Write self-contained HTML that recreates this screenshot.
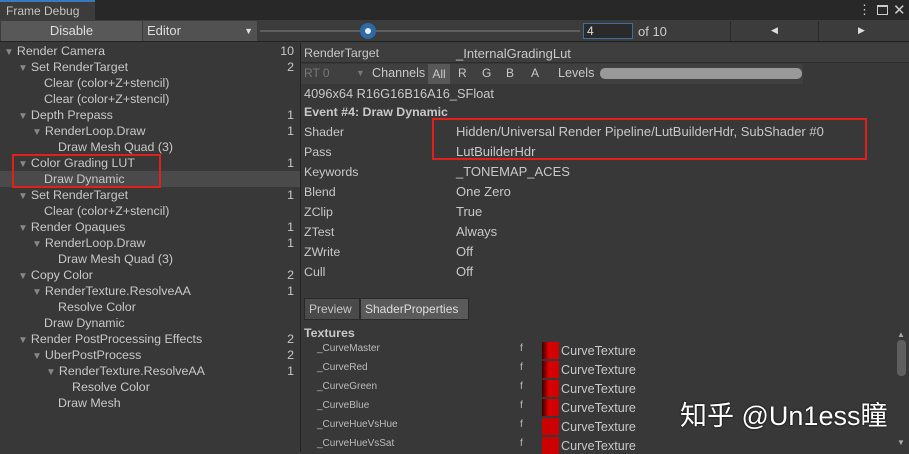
<!DOCTYPE html><html><head><style>
*{margin:0;padding:0;box-sizing:border-box}
body{width:909px;height:452px;background:#383838;font-family:"Liberation Sans",sans-serif;font-size:12px;color:#c8c8c8;position:relative;overflow:hidden}
.a{position:absolute;white-space:nowrap}
.r{position:absolute;left:0;width:300px;height:16px;line-height:16px;font-size:12.4px}
.n{position:absolute;right:6px;top:0}
.tri{color:#888;font-size:10px;margin-right:3px}
.k{position:absolute;left:304px;font-size:12.4px}
.v{position:absolute;left:456px;font-size:13px}
.tx{position:absolute;left:317px;font-size:10px;color:#bbb}
.f{position:absolute;left:520px;font-size:10px;color:#bbb}
.sw{position:absolute;left:542px;width:17px;height:17px;background:linear-gradient(90deg,#3a0000,#d00 40%,#c00)}
.ct{position:absolute;left:561px;font-size:12.6px}
</style></head><body>
<div class="a" style="left:0;top:0;width:909px;height:20px;background:#282828"></div>
<div class="a" style="left:0;top:0;width:95px;height:2px;background:#3a79bb"></div>
<div class="a" style="left:0;top:2px;width:95px;height:18px;background:#3c3c3c;line-height:18px;padding-left:6px;color:#c4c4c4">Frame Debug</div>
<div class="a" style="left:858px;top:2px;color:#ccc;font-size:13px">⋮</div>
<div class="a" style="left:877px;top:5px;width:11px;height:10px;border:1px solid #ccc;border-top-width:2px"></div>
<div class="a" style="left:893px;top:1px;color:#ccc;font-size:15px">✕</div>
<div class="a" style="left:0;top:20px;width:909px;height:22px;background:#3c3c3c;border-bottom:1px solid #232323"></div>
<div class="a" style="left:1px;top:21px;width:141px;height:20px;background:#585858;text-align:center;line-height:20px;color:#ddd;font-size:13px">Disable</div>
<div class="a" style="left:143px;top:21px;width:114px;height:20px;background:#515151;line-height:20px;padding-left:4px;color:#ddd;font-size:13px">Editor<span style="position:absolute;right:4px;font-size:9px">▼</span></div>
<div class="a" style="left:260px;top:30px;width:320px;height:2px;background:#5e5e5e"></div>
<div class="a" style="left:360px;top:23px;width:16px;height:16px;border-radius:50%;background:#2d6aa8"></div>
<div class="a" style="left:365px;top:28px;width:6px;height:6px;border-radius:50%;background:#eee"></div>
<div class="a" style="left:583px;top:23px;width:50px;height:16px;background:#2a2a2a;border:1px solid #3b6ea5;color:#ddd;line-height:14px;padding-left:3px">4</div>
<div class="a" style="left:638px;top:24px;color:#ccc;font-size:13px">of 10</div>
<div class="a" style="left:730px;top:21px;width:1px;height:20px;background:#2a2a2a"></div>
<div class="a" style="left:818px;top:21px;width:1px;height:20px;background:#2a2a2a"></div>
<div class="a" style="left:771px;top:25px;font-size:9px;color:#ddd">◀</div>
<div class="a" style="left:858px;top:25px;font-size:9px;color:#ddd">▶</div>
<div class="a" style="left:300px;top:43px;width:1px;height:409px;background:#232323"></div>

<div class="r" style="top:43px;padding-left:4px"><span class="tri">▼</span>Render Camera<span class="n">10</span></div>
<div class="r" style="top:59px;padding-left:18px"><span class="tri">▼</span>Set RenderTarget<span class="n">2</span></div>
<div class="r" style="top:75px;padding-left:44px">Clear (color+Z+stencil)</div>
<div class="r" style="top:91px;padding-left:44px">Clear (color+Z+stencil)</div>
<div class="r" style="top:107px;padding-left:18px"><span class="tri">▼</span>Depth Prepass<span class="n">1</span></div>
<div class="r" style="top:123px;padding-left:32px"><span class="tri">▼</span>RenderLoop.Draw<span class="n">1</span></div>
<div class="r" style="top:139px;padding-left:58px">Draw Mesh Quad (3)</div>
<div class="r" style="top:155px;padding-left:18px"><span class="tri">▼</span>Color Grading LUT<span class="n">1</span></div>
<div class="r" style="top:171px;padding-left:44px;background:#4a4a4a;width:300px">Draw Dynamic</div>
<div class="r" style="top:187px;padding-left:18px"><span class="tri">▼</span>Set RenderTarget<span class="n">1</span></div>
<div class="r" style="top:203px;padding-left:44px">Clear (color+Z+stencil)</div>
<div class="r" style="top:219px;padding-left:18px"><span class="tri">▼</span>Render Opaques<span class="n">1</span></div>
<div class="r" style="top:235px;padding-left:32px"><span class="tri">▼</span>RenderLoop.Draw<span class="n">1</span></div>
<div class="r" style="top:251px;padding-left:58px">Draw Mesh Quad (3)</div>
<div class="r" style="top:267px;padding-left:18px"><span class="tri">▼</span>Copy Color<span class="n">2</span></div>
<div class="r" style="top:283px;padding-left:32px"><span class="tri">▼</span>RenderTexture.ResolveAA<span class="n">1</span></div>
<div class="r" style="top:299px;padding-left:58px">Resolve Color</div>
<div class="r" style="top:315px;padding-left:44px">Draw Dynamic</div>
<div class="r" style="top:331px;padding-left:18px"><span class="tri">▼</span>Render PostProcessing Effects<span class="n">2</span></div>
<div class="r" style="top:347px;padding-left:32px"><span class="tri">▼</span>UberPostProcess<span class="n">2</span></div>
<div class="r" style="top:363px;padding-left:46px"><span class="tri">▼</span>RenderTexture.ResolveAA<span class="n">1</span></div>
<div class="r" style="top:379px;padding-left:72px">Resolve Color</div>
<div class="r" style="top:395px;padding-left:58px">Draw Mesh</div>
<div class="a" style="left:12px;top:154px;width:149px;height:34px;border:2px solid #e0201c"></div>

<div class="a" style="left:301px;top:43px;width:608px;height:20px;background:#3e3e3e;border-bottom:1px solid #2c2c2c"></div>
<div class="k" style="top:46px">RenderTarget</div><div class="v" style="top:46px">_InternalGradingLut</div>
<div class="a" style="left:301px;top:64px;width:502px;height:20px;background:#404040"></div>
<div class="a" style="left:304px;top:66px;color:#777">RT 0</div><div class="a" style="left:356px;top:68px;font-size:9px;color:#777">▼</div>
<div class="a" style="left:372px;top:66px;font-size:12.6px">Channels</div>
<div class="a" style="left:428px;top:64px;width:22px;height:20px;background:#585858;text-align:center;line-height:20px">All</div>
<div class="a" style="left:458px;top:66px">R</div><div class="a" style="left:482px;top:66px">G</div><div class="a" style="left:506px;top:66px">B</div><div class="a" style="left:531px;top:66px">A</div>
<div class="a" style="left:558px;top:66px;font-size:12.6px">Levels</div>
<div class="a" style="left:600px;top:68px;width:202px;height:11px;background:#999;border-radius:5px"></div>
<div class="k" style="top:86px;font-size:12.8px">4096x64 R16G16B16A16_SFloat</div>
<div class="k" style="top:105px;font-weight:bold">Event #4: Draw Dynamic</div>
<div class="k" style="top:125px">Shader</div><div class="v" style="top:124px">Hidden/Universal Render Pipeline/LutBuilderHdr, SubShader #0</div>
<div class="k" style="top:145px">Pass</div><div class="v" style="top:144px">LutBuilderHdr</div>
<div class="k" style="top:165px">Keywords</div><div class="v" style="top:164px">_TONEMAP_ACES</div>
<div class="k" style="top:185px">Blend</div><div class="v" style="top:184px">One Zero</div>
<div class="k" style="top:205px">ZClip</div><div class="v" style="top:204px">True</div>
<div class="k" style="top:225px">ZTest</div><div class="v" style="top:224px">Always</div>
<div class="k" style="top:245px">ZWrite</div><div class="v" style="top:244px">Off</div>
<div class="k" style="top:265px">Cull</div><div class="v" style="top:264px">Off</div>
<div class="a" style="left:432px;top:118px;width:435px;height:42px;border:2px solid #e0201c"></div>
<div class="a" style="left:304px;top:298px;width:56px;height:22px;background:#4a4a4a;border:1px solid #2a2a2a;line-height:20px;padding-left:4px">Preview</div>
<div class="a" style="left:360px;top:298px;width:109px;height:22px;background:#5a5a5a;border:1px solid #2a2a2a;line-height:20px;padding-left:4px;color:#ddd">ShaderProperties</div>
<div class="k" style="top:326px;font-weight:bold">Textures</div>
<div class="tx" style="top:343px">_CurveMaster</div><div class="f" style="top:343px">f</div><div class="sw" style="top:342px"></div><div class="ct" style="top:344px">CurveTexture</div>
<div class="tx" style="top:362px">_CurveRed</div><div class="f" style="top:362px">f</div><div class="sw" style="top:361px"></div><div class="ct" style="top:363px">CurveTexture</div>
<div class="tx" style="top:381px">_CurveGreen</div><div class="f" style="top:381px">f</div><div class="sw" style="top:380px"></div><div class="ct" style="top:382px">CurveTexture</div>
<div class="tx" style="top:400px">_CurveBlue</div><div class="f" style="top:400px">f</div><div class="sw" style="top:399px"></div><div class="ct" style="top:401px">CurveTexture</div>
<div class="tx" style="top:419px">_CurveHueVsHue</div><div class="f" style="top:419px">f</div><div class="sw" style="top:418px;background:#c00"></div><div class="ct" style="top:420px">CurveTexture</div>
<div class="tx" style="top:438px">_CurveHueVsSat</div><div class="f" style="top:438px">f</div><div class="sw" style="top:437px;background:#c00"></div><div class="ct" style="top:439px">CurveTexture</div>
<div class="a" style="left:897px;top:330px;font-size:8px;color:#aaa">▲</div>
<div class="a" style="left:897px;top:340px;width:9px;height:36px;background:#5f5f5f;border-radius:4px"></div>
<div class="a" style="left:897px;top:438px;font-size:8px;color:#aaa">▼</div>
<div class="a" style="left:680px;top:394px;font-size:27px;color:#fff;font-family:'Liberation Sans','Noto Sans CJK SC',sans-serif;text-shadow:0 0 2px #000">知乎 @Un1ess瞳</div>
</body></html>
